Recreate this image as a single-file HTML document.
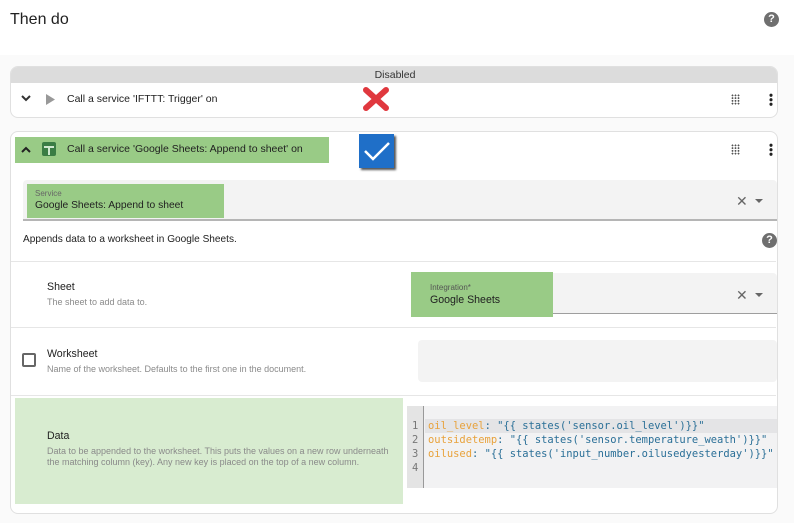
<!DOCTYPE html>
<html><head><meta charset="utf-8"><style>
*{box-sizing:border-box;margin:0;padding:0}
body{width:794px;height:523px;background:#fafafa;font-family:"Liberation Sans",sans-serif;position:relative;overflow:hidden;color:#212121}
.a{position:absolute}
.card{position:absolute;background:#fff;border:1px solid #e0e0e0;border-radius:8px}
.t{font-size:10.6px;color:#212121;white-space:nowrap}
.s{font-size:9px;color:#8a8a8a;white-space:nowrap}
.field{position:absolute;background:#f3f3f3;border-bottom:1px solid #9e9e9e;border-radius:4px 4px 0 0}
.hr{position:absolute;left:11px;width:765px;height:1px;background:#e6e6e6}
.help{position:absolute;width:15px;height:15px;border-radius:50%;background:#6f6f6f;color:#fff;font-size:11px;font-weight:bold;text-align:center;line-height:15px}
.code{font-family:"DejaVu Sans Mono","Liberation Mono",monospace;font-size:10.45px;line-height:14px;white-space:pre}
.grid{position:absolute;width:9px;height:11px;background:radial-gradient(circle,#555 0.8px,transparent 1px) 0 0/3px 2.75px}
</style></head><body>
<div class="a" style="left:0;top:0;width:794px;height:55px;background:#fff"></div>
<div class="a" style="left:10px;top:11px;font-size:16px;color:#212121">Then do</div>
<div class="help" style="left:764px;top:12px">?</div>

<div class="card" style="left:10px;top:66px;width:768px;height:52px;overflow:hidden">
 <div class="a" style="left:0;top:0;width:768px;height:16px;background:#dcdcdc;text-align:center;font-size:10.5px;line-height:16px;color:#333">Disabled</div>
</div>
<svg class="a" style="left:20px;top:94px" width="12" height="10"><path d="M2 2l4 4 4-4" stroke="#333" stroke-width="2" fill="none"/></svg>
<svg class="a" style="left:45px;top:94px" width="10" height="11"><path d="M1 0v11l9-5.5z" fill="#999"/></svg>
<div class="a t" style="left:67px;top:93px;font-size:10.5px">Call a service 'IFTTT: Trigger' on</div>
<svg class="a" style="left:362px;top:86px" width="28" height="26"><path d="M4 4L24 22M24 4L4 22" stroke="#e0383e" stroke-width="6" stroke-linecap="round"/></svg>
<div class="grid" style="left:731px;top:94px"></div>
<div class="a" style="left:769px;top:93px;width:4px;height:13px;background:radial-gradient(circle,#222 1.5px,transparent 1.7px) 0 0/4px 4.5px"></div>

<div class="card" style="left:10px;top:131px;width:768px;height:383px"></div>
<div class="a" style="left:15px;top:137px;width:314px;height:26px;background:#99cb86"></div>
<svg class="a" style="left:20px;top:145px" width="12" height="10"><path d="M2 7l4-4 4 4" stroke="#222" stroke-width="2" fill="none"/></svg>
<div class="a" style="left:42px;top:142px;width:14px;height:14px;background:#3a7d44;border-radius:2px"></div>
<div class="a" style="left:48px;top:147px;width:2px;height:8px;background:#cfe8cf"></div>
<div class="a" style="left:44px;top:146px;width:10px;height:2px;background:#cfe8cf"></div>
<div class="a t" style="left:67px;top:143px;font-size:10.5px">Call a service 'Google Sheets: Append to sheet' on</div>
<div class="a" style="left:359px;top:134px;width:35px;height:34px;background:#1f6fc8;box-shadow:2px 2px 2px #555"></div>
<svg class="a" style="left:359px;top:134px" width="35" height="34"><path d="M6 17l8 8 16-16" stroke="#fff" stroke-width="2.5" fill="none"/></svg>
<div class="grid" style="left:731px;top:144px"></div>
<div class="a" style="left:769px;top:143px;width:4px;height:13px;background:radial-gradient(circle,#222 1.5px,transparent 1.7px) 0 0/4px 4.5px"></div>

<div class="field" style="left:23px;top:180px;width:754px;height:41px;border-bottom:2px solid #b5b5b5"></div>
<div class="a" style="left:27px;top:184px;width:197px;height:34px;background:#99cb86"></div>
<div class="a s" style="left:35px;top:189px;color:#666;font-size:8px">Service</div>
<div class="a t" style="left:35px;top:200px;font-size:10.3px">Google Sheets: Append to sheet</div>
<div class="a" style="left:736px;top:193px;font-size:14px;color:#666">&#x2715;</div>
<svg class="a" style="left:755px;top:199px" width="8" height="5"><path d="M0 0h8L4 4z" fill="#666"/></svg>

<div class="a t" style="left:23px;top:234px;font-size:10.1px">Appends data to a worksheet in Google Sheets.</div>
<div class="help" style="left:762px;top:233px">?</div>
<div class="hr" style="top:261px"></div>

<div class="a t" style="left:47px;top:281px">Sheet</div>
<div class="a s" style="left:47px;top:297px">The sheet to add data to.</div>
<div class="field" style="left:418px;top:273px;width:359px;height:41px"></div>
<div class="a" style="left:411px;top:272px;width:142px;height:45px;background:#99cb86"></div>
<div class="a s" style="left:430px;top:283px;color:#555;font-size:8px">Integration*</div>
<div class="a t" style="left:430px;top:294px">Google Sheets</div>
<div class="a" style="left:736px;top:287px;font-size:14px;color:#666">&#x2715;</div>
<svg class="a" style="left:755px;top:293px" width="8" height="5"><path d="M0 0h8L4 4z" fill="#666"/></svg>
<div class="hr" style="top:327px"></div>

<div class="a" style="left:22px;top:353px;width:14px;height:14px;border:2px solid #666;border-radius:2px"></div>
<div class="a t" style="left:47px;top:348px">Worksheet</div>
<div class="a s" style="left:47px;top:364px">Name of the worksheet. Defaults to the first one in the document.</div>
<div class="a" style="left:418px;top:340px;width:359px;height:42px;background:#f3f3f3;border-radius:4px"></div>
<div class="hr" style="top:395px"></div>

<div class="a" style="left:15px;top:398px;width:388px;height:106px;background:#d8ecd0"></div>
<div class="a t" style="left:47px;top:430px">Data</div>
<div class="a s" style="left:47px;top:446px;line-height:11px;white-space:normal;width:352px">Data to be appended to the worksheet. This puts the values on a new row underneath the matching column (key). Any new key is placed on the top of a new column.</div>

<div class="a" style="left:407px;top:406px;width:370px;height:82px;background:#f2f2f3"></div>
<div class="a" style="left:407px;top:406px;width:17px;height:82px;background:#e4e4e4;border-right:1px solid #999"></div>
<div class="a" style="left:425px;top:419px;width:352px;height:14px;background:#e4e4e6"></div>
<div class="a code" style="left:412px;top:419px;color:#777">1
2
3
4</div>
<div class="a code" style="left:428px;top:419px;color:#2a6f97"><span style="color:#e8a23b">oil_level</span>: "{{ states('sensor.oil_level')}}"
<span style="color:#e8a23b">outsidetemp</span>: "{{ states('sensor.temperature_weath')}}"
<span style="color:#e8a23b">oilused</span>: "{{ states('input_number.oilusedyesterday')}}"</div>
</body></html>
